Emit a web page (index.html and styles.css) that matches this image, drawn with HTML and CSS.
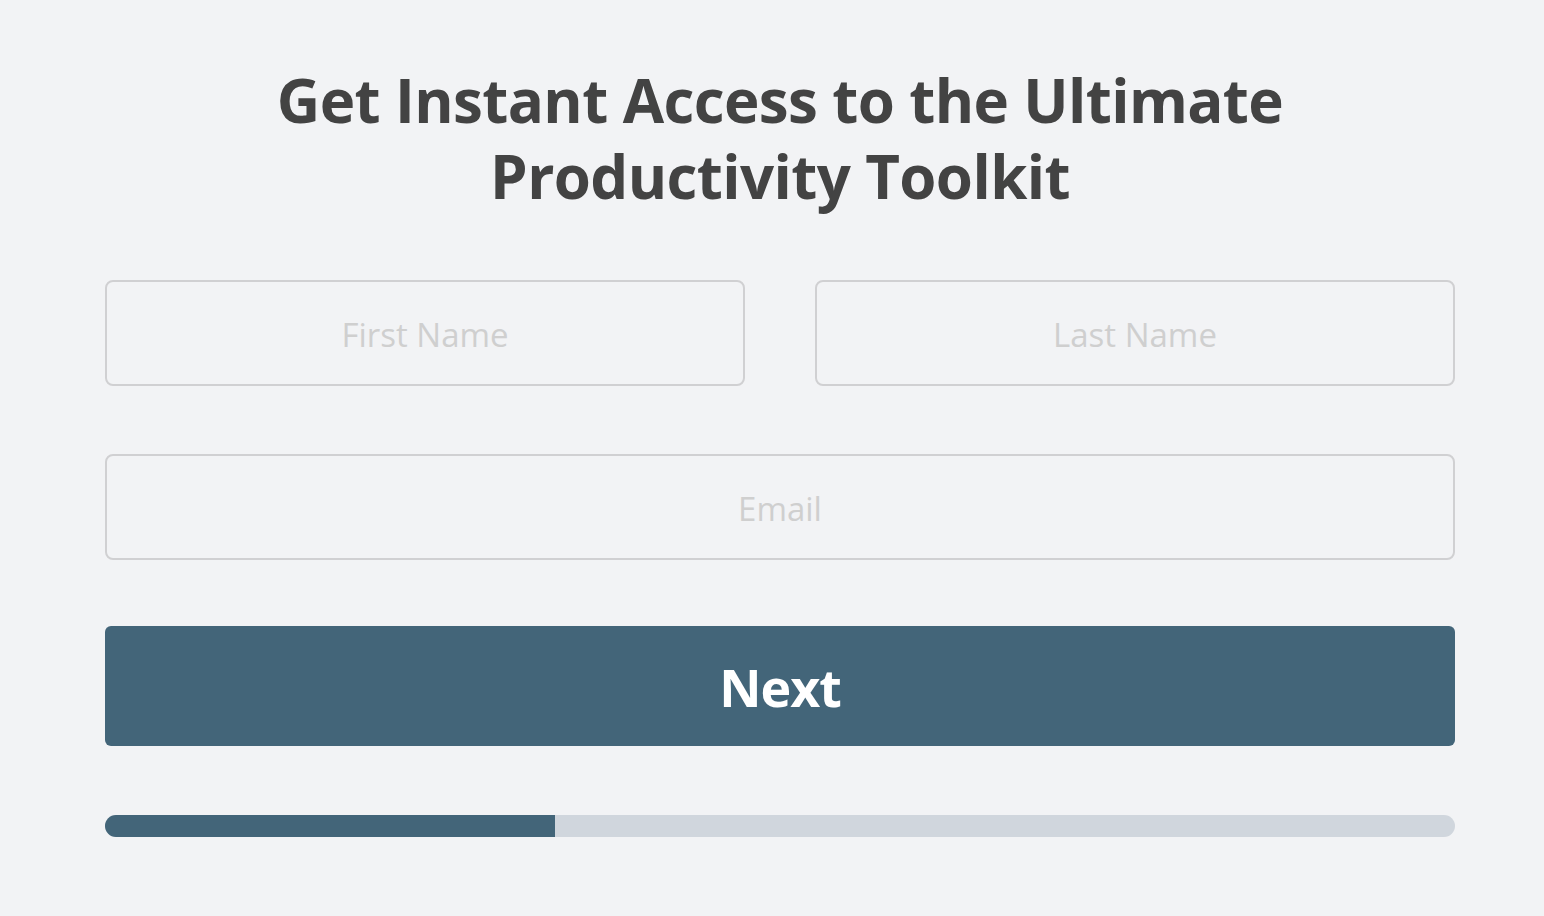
FILE: index.html
```html
<!DOCTYPE html>
<html lang="en">

<head>
    <meta charset="UTF-8">
    <meta name="viewport" content="width=device-width, initial-scale=1.0">
    <title>Productivity Toolkit</title>
    <link rel="stylesheet" href="styles.css">
</head>

<body>
    <div class="signup">
        <h1 class="signup-title">Get Instant Access to the Ultimate Productivity Toolkit</h1>

        <form class="signup-form">
            <div class="row two">
                <input type="text" class="field" placeholder="First Name">
                <input type="text" class="field" placeholder="Last Name">
            </div>
            <div class="row">
                <input type="email" class="field" placeholder="Email">
            </div>
            <button type="button" class="next-btn">Next</button>
        </form>

        <div class="progress">
            <div class="progress-fill" style="width: 33.33%"></div>
        </div>
    </div>
</body>

</html>
```

FILE: styles.css
```css
body {
    margin: 0;
    padding: 0;
    background-color: #f2f3f5;
    font-family: "Open Sans", "Noto Sans", sans-serif;
}

.signup {
    width: 1350px;
    margin-left: 105px;
    padding-top: 62px;
}

.signup-title {
    margin: 0 auto 66px;
    width: 1040px;
    text-align: center;
    font-size: 60px;
    line-height: 76px;
    font-weight: 700;
    color: #434343;
    letter-spacing: -0.6px;
}

.signup-form {
    display: flex;
    flex-direction: column;
    gap: 68px;
}

.row {
    display: grid;
    grid-template-columns: 1fr;
}

.row.two {
    grid-template-columns: 1fr 1fr;
    column-gap: 70px;
}

.field {
    box-sizing: border-box;
    height: 106px;
    border: 2px solid #d0d0d2;
    border-radius: 8px;
    background: transparent;
    text-align: center;
    font-family: inherit;
    font-size: 33px;
    padding-top: 4px;
    color: #434343;
    outline: none;
}

.field::placeholder {
    color: #cfcfcf;
}

.next-btn {
    margin-top: -2px;
    height: 120px;
    border: none;
    border-radius: 6px;
    background-color: #436579;
    color: #fff;
    font-family: inherit;
    font-size: 52px;
    font-weight: 700;
    letter-spacing: -1px;
    cursor: pointer;
}

.progress {
    margin-top: 69px;
    height: 22px;
    border-radius: 11px;
    background-color: #d0d6dd;
    overflow: hidden;
}

.progress-fill {
    height: 100%;
    background-color: #436579;
}
```
